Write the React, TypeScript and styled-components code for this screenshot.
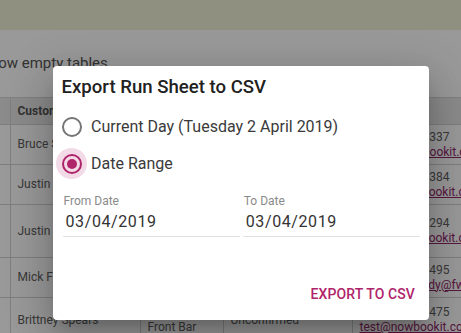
import React, { useState } from "react";
import styled, { createGlobalStyle } from "styled-components";

const GlobalStyle = createGlobalStyle`
  html, body {
    margin: 0;
    padding: 0;
    width: 461px;
    height: 333px;
    overflow: hidden;
    background: #ffffff;
    font-family: Roboto, "Liberation Sans", sans-serif;
  }
`;

const PINK = "#b0246a";

const Page = styled.div`
  position: relative;
  width: 461px;
  height: 333px;
  overflow: hidden;
  background: #ffffff;
`;

const TopBand = styled.div`
  height: 30px;
  background: #eef0d6;
`;

const Toolbar = styled.div`
  padding: 23px 0 24px;
  display: flex;
  align-items: center;
`;

const Headline = styled.span`
  margin-left: -19px;
  font-size: 15px;
  line-height: 20px;
  color: #555555;
  white-space: nowrap;
`;

const Table = styled.table`
  border-collapse: collapse;
  table-layout: fixed;
  width: 552px;
  border-top: 1px solid #d6d6d6;
`;

const HeadRow = styled.tr`
  height: 27px;
  background: #e8e8e8;
`;

const Row = styled.tr<{ $h: number }>`
  height: ${(p) => p.$h}px;
  border-top: 1px solid #d2d2d2;
`;

const HeadCell = styled.th`
  text-align: left;
  padding: 0 7px;
  font-size: 12px;
  font-weight: 700;
  color: #555555;
  border-left: 1px solid #d2d2d2;
  white-space: nowrap;
  overflow: hidden;
  &:first-child {
    border-left: none;
  }
`;

const Cell = styled.td`
  padding: 0 7px;
  font-size: 12px;
  line-height: 15px;
  color: #606060;
  border-left: 1px solid #d2d2d2;
  vertical-align: middle;
  white-space: nowrap;
  overflow: hidden;
  &:first-child {
    border-left: none;
  }
`;

const Line = styled.div``;

const Mail = styled.div`
  color: #92286a;
  text-decoration: underline;
`;

const Backdrop = styled.div`
  position: absolute;
  inset: 0;
  background: rgba(0, 0, 0, 0.4);
`;

const Dialog = styled.div`
  position: absolute;
  left: 53px;
  top: 66px;
  width: 376px;
  height: 254px;
  background: #ffffff;
  border-radius: 4px;
  box-shadow: 0 11px 15px -7px rgba(0, 0, 0, 0.2),
    0 24px 38px 3px rgba(0, 0, 0, 0.14), 0 9px 46px 8px rgba(0, 0, 0, 0.12);
  display: flex;
  flex-direction: column;
  box-sizing: border-box;
`;

const Title = styled.h2`
  margin: 0;
  padding: 9px 8px 0 8.5px;
  font-size: 18.6px;
  line-height: 24px;
  font-weight: 500;
  color: #212121;
`;

const Body = styled.div`
  padding: 0 9px 0 10px;
`;

const RadioGroup = styled.div`
  margin-top: 9px;
  display: flex;
  flex-direction: column;
`;

const RadioRow = styled.label`
  display: flex;
  align-items: center;
  height: 37px;
  cursor: pointer;
`;

const RadioHalo = styled.span<{ $checked: boolean }>`
  width: 31px;
  height: 31px;
  margin-left: -7px;
  border-radius: 50%;
  display: flex;
  align-items: center;
  justify-content: center;
  background: ${(p) => (p.$checked ? "rgba(176, 36, 106, 0.17)" : "transparent")};
`;

const RadioRing = styled.span<{ $checked: boolean }>`
  width: 20px;
  height: 20px;
  box-sizing: border-box;
  border-radius: 50%;
  border: 2px solid ${(p) => (p.$checked ? PINK : "#757575")};
  display: flex;
  align-items: center;
  justify-content: center;
`;

const RadioDot = styled.span`
  width: 10px;
  height: 10px;
  border-radius: 50%;
  background: ${PINK};
`;

const RadioText = styled.span`
  margin-left: 4px;
  font-size: 16px;
  color: #3a3a3a;
`;

const Fields = styled.div`
  margin-top: 11px;
  display: grid;
  grid-template-columns: 1fr 1fr;
  column-gap: 3.5px;
`;

const Field = styled.div`
  display: flex;
  flex-direction: column;
  padding-bottom: 4px;
  border-bottom: 1px solid #e2e2e2;
`;

const FieldLabel = styled.span`
  padding-left: 0.5px;
  font-size: 12px;
  line-height: 16px;
  color: #8a8a8a;
`;

const FieldValue = styled.span`
  margin-top: 3px;
  padding-left: 2.5px;
  font-size: 16px;
  line-height: 20px;
  letter-spacing: 0.6px;
  color: #333333;
`;

const Actions = styled.div`
  margin-top: auto;
  display: flex;
  justify-content: flex-end;
  padding: 8px 6px 8px;
`;

const TextButton = styled.button`
  border: none;
  background: transparent;
  padding: 8px 8px;
  font-family: inherit;
  font-size: 14px;
  line-height: 20px;
  font-weight: 500;
  letter-spacing: 0.1px;
  text-transform: uppercase;
  color: ${PINK};
  cursor: pointer;
`;

const rows = [
  { h: 40, name: "Bruce Springsteen", area: ["Main Dining"], status: "Confirmed", phone: "+61 400 111 337", email: "bruce@nowbookit.com" },
  { h: 40, name: "Justin Bieber", area: ["Main Dining"], status: "Confirmed", phone: "+61 400 222 384", email: "justin@nowbookit.com" },
  { h: 53, name: "Justin Timberlake", area: ["Table 4", "Main Dining"], status: "Seated", phone: "+61 400 333 294", email: "justin@nowbookit.com" },
  { h: 40, name: "Mick Fleetwood", area: ["Main Dining"], status: "Confirmed", phone: "+61 400 444 495", email: "mick.fletwoody@fwmac.com" },
  { h: 45, name: "Brittney Spears", area: ["Table 9", "Front Bar"], status: "Unconfirmed", phone: "+61 400 555 475", email: "test@nowbookit.com" },
];

export default function App() {
  const [mode, setMode] = useState<"day" | "range">("range");

  return (
    <>
      <GlobalStyle />
      <Page>
        <TopBand />
        <Toolbar>
          <Headline>Show empty tables</Headline>
        </Toolbar>
        <Table>
          <colgroup>
            <col style={{ width: 10 }} />
            <col style={{ width: 130 }} />
            <col style={{ width: 83 }} />
            <col style={{ width: 129 }} />
            <col style={{ width: 200 }} />
          </colgroup>
          <thead>
            <HeadRow>
              <HeadCell />
              <HeadCell>Customer</HeadCell>
              <HeadCell>Table</HeadCell>
              <HeadCell>Status</HeadCell>
              <HeadCell>Contact</HeadCell>
            </HeadRow>
          </thead>
          <tbody>
            {rows.map((r, i) => (
              <Row key={i} $h={r.h}>
                <Cell />
                <Cell>{r.name}</Cell>
                <Cell>
                  {r.area.map((a) => (
                    <Line key={a}>{a}</Line>
                  ))}
                </Cell>
                <Cell>{r.status}</Cell>
                <Cell>
                  <Line>{r.phone}</Line>
                  <Mail>{r.email}</Mail>
                </Cell>
              </Row>
            ))}
          </tbody>
        </Table>

        <Backdrop />
        <Dialog>
          <Title>Export Run Sheet to CSV</Title>
          <Body>
            <RadioGroup>
              <RadioRow onClick={() => setMode("day")}>
                <RadioHalo $checked={mode === "day"}>
                  <RadioRing $checked={mode === "day"}>
                    {mode === "day" && <RadioDot />}
                  </RadioRing>
                </RadioHalo>
                <RadioText>Current Day (Tuesday 2 April 2019)</RadioText>
              </RadioRow>
              <RadioRow onClick={() => setMode("range")}>
                <RadioHalo $checked={mode === "range"}>
                  <RadioRing $checked={mode === "range"}>
                    {mode === "range" && <RadioDot />}
                  </RadioRing>
                </RadioHalo>
                <RadioText>Date Range</RadioText>
              </RadioRow>
            </RadioGroup>
            <Fields>
              <Field>
                <FieldLabel>From Date</FieldLabel>
                <FieldValue>03/04/2019</FieldValue>
              </Field>
              <Field>
                <FieldLabel>To Date</FieldLabel>
                <FieldValue>03/04/2019</FieldValue>
              </Field>
            </Fields>
          </Body>
          <Actions>
            <TextButton>Export to CSV</TextButton>
          </Actions>
        </Dialog>
      </Page>
    </>
  );
}
